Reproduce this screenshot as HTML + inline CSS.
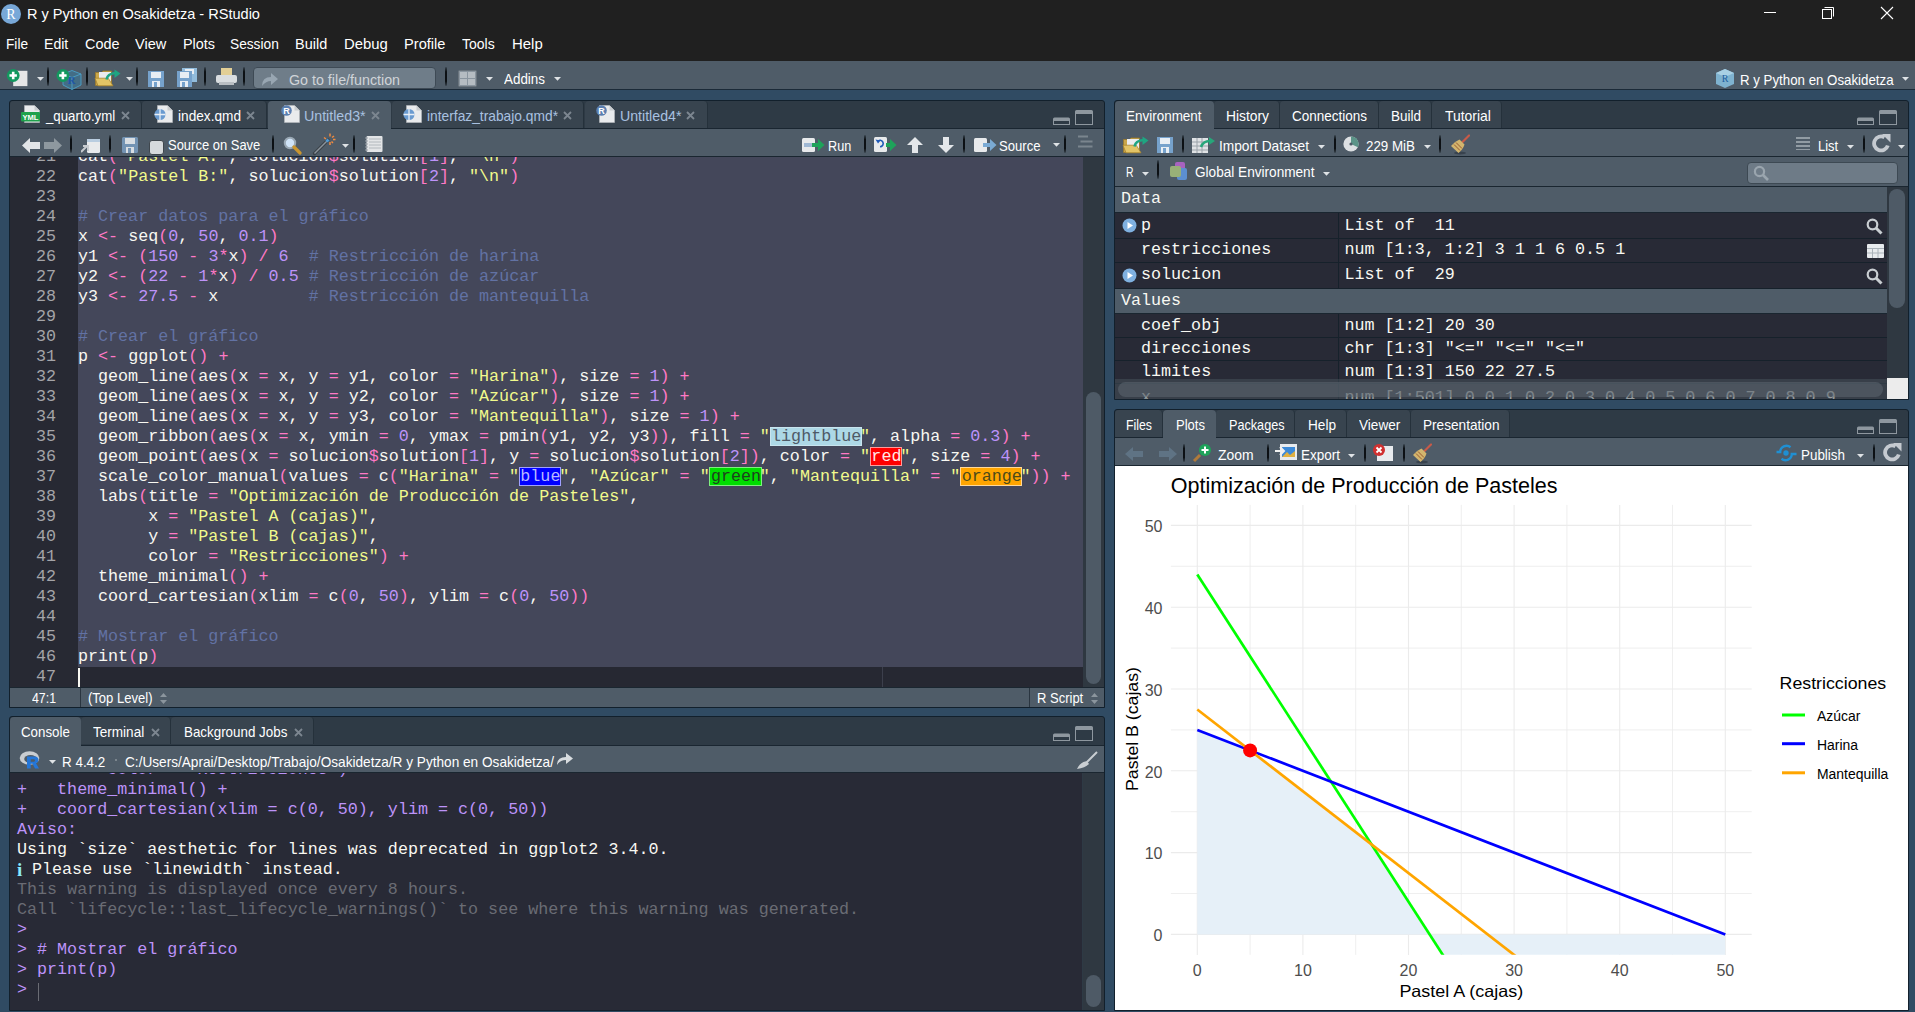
<!DOCTYPE html>
<html><head><meta charset="utf-8">
<style>
*{margin:0;padding:0;box-sizing:border-box}
html,body{width:1915px;height:1012px;overflow:hidden;background:#304b63;font-family:"Liberation Sans",sans-serif;color:#fff;position:relative}
.a{position:absolute}
.ui{font-family:"Liberation Sans",sans-serif;white-space:nowrap}
.mono{font-family:"Liberation Mono",monospace;white-space:pre}
.s{color:#f1fa8c}.n{color:#bd93f9}.o{color:#ff79c6}.c{color:#6272a4}
</style></head><body>

<div class="a" style="left:0px;top:0px;width:1915px;height:61px;background:#202020;"></div>
<svg class="a" style="left:0px;top:3px;" width="22" height="22" viewBox="0 0 22 22"><circle cx="11" cy="11" r="10" fill="#78a8d8"/><text x="11" y="16" font-family="Liberation Serif" font-size="14" fill="#fff" text-anchor="middle">R</text></svg>
<div class="a ui" style="left:27.40px;top:3.80px;font-size:15px;line-height:20px;color:#fff;transform:scaleX(0.9702);transform-origin:0 0;">R y Python en Osakidetza - RStudio</div>
<div class="a" style="left:1764px;top:12px;width:12px;height:1px;background:#fff;"></div>
<svg class="a" style="left:1821px;top:6px;" width="14" height="14" viewBox="0 0 14 14"><rect x="1.5" y="3.5" width="9" height="9" fill="none" stroke="#fff" stroke-width="1"/><path d="M3.5 1.5h9v9" fill="none" stroke="#fff" stroke-width="1"/></svg>
<svg class="a" style="left:1880px;top:6px;" width="14" height="14" viewBox="0 0 14 14"><path d="M1 1L13 13M13 1L1 13" stroke="#fff" stroke-width="1.1"/></svg>
<div class="a ui" style="left:6.40px;top:33.80px;font-size:15px;line-height:20px;color:#fff;transform:scaleX(0.9110);transform-origin:0 0;">File</div>
<div class="a ui" style="left:44.40px;top:33.80px;font-size:15px;line-height:20px;color:#fff;transform:scaleX(0.9391);transform-origin:0 0;">Edit</div>
<div class="a ui" style="left:85.40px;top:33.80px;font-size:15px;line-height:20px;color:#fff;transform:scaleX(0.9623);transform-origin:0 0;">Code</div>
<div class="a ui" style="left:135.40px;top:33.80px;font-size:15px;line-height:20px;color:#fff;transform:scaleX(0.9705);transform-origin:0 0;">View</div>
<div class="a ui" style="left:183.00px;top:33.80px;font-size:15px;line-height:20px;color:#fff;transform:scaleX(0.9588);transform-origin:0 0;">Plots</div>
<div class="a ui" style="left:230.40px;top:33.80px;font-size:15px;line-height:20px;color:#fff;transform:scaleX(0.9139);transform-origin:0 0;">Session</div>
<div class="a ui" style="left:295.30px;top:33.80px;font-size:15px;line-height:20px;color:#fff;transform:scaleX(0.9648);transform-origin:0 0;">Build</div>
<div class="a ui" style="left:344.20px;top:33.80px;font-size:15px;line-height:20px;color:#fff;transform:scaleX(0.9915);transform-origin:0 0;">Debug</div>
<div class="a ui" style="left:404.40px;top:33.80px;font-size:15px;line-height:20px;color:#fff;transform:scaleX(0.9759);transform-origin:0 0;">Profile</div>
<div class="a ui" style="left:462.00px;top:33.80px;font-size:15px;line-height:20px;color:#fff;transform:scaleX(0.9336);transform-origin:0 0;">Tools</div>
<div class="a ui" style="left:511.70px;top:33.80px;font-size:15px;line-height:20px;color:#fff;transform:scaleX(0.9959);transform-origin:0 0;">Help</div>
<div class="a" style="left:0px;top:61px;width:1915px;height:29px;background:#4f5c68;border-bottom:1px solid #1b2a38"></div>
<svg class="a" style="left:6px;top:67px;" width="24" height="22" viewBox="0 0 24 22"><rect x="7.2" y="3.8" width="14.2" height="15.3" fill="#e6e6e6"/><circle cx="7.2" cy="8.5" r="6.4" fill="#13985e"/><path d="M7.2 4.8v7.4M3.5 8.5h7.4" stroke="#fff" stroke-width="2.6"/></svg>
<svg class="a" style="left:36.5px;top:77px;" width="7" height="4" viewBox="0 0 7 4"><path d="M0 0h7L3.5 3.8z" fill="#dfe3e6"/></svg>
<div class="a" style="left:47px;top:67px;width:2px;height:19px;background:linear-gradient(#3a4650,#0c1014 25%,#0c1014 75%,#3a4650);border-radius:1px"></div>
<svg class="a" style="left:56px;top:67px;" width="27" height="23" viewBox="0 0 27 23"><path d="M16 3.5l9 3.5v11l-9 4.5-9-4.5V7z" fill="#3f7390" fill-opacity="0.75" stroke="#4aa0c8" stroke-width="0.9"/><path d="M7 7l9 3.5 9-3.5M16 10.5v12" stroke="#4aa0c8" stroke-width="0.9" fill="none"/><text x="15.5" y="17" font-family="Liberation Serif" font-size="11" font-weight="bold" fill="#1f55a8" text-anchor="middle">R</text><circle cx="6.9" cy="8.5" r="6.4" fill="#13985e"/><path d="M6.9 4.8v7.4M3.2 8.5h7.4" stroke="#fff" stroke-width="2.6"/></svg>
<div class="a" style="left:86px;top:67px;width:2px;height:19px;background:linear-gradient(#3a4650,#0c1014 25%,#0c1014 75%,#3a4650);border-radius:1px"></div>
<svg class="a" style="left:94px;top:69px;" width="28" height="19" viewBox="0 0 28 19"><path d="M1.5 3.5h6l1.5-1.5h8.5v14.5H1.5z" fill="#c9a64a" stroke="#9b7a2c" stroke-width="0.8"/><rect x="5" y="3" width="12" height="11" fill="#ebebed"/><path d="M1 9.2h13.2l4.8 7.6H4z" fill="#e2c466" stroke="#a98530" stroke-width="0.8"/><path d="M12.5 10.5q1-6 9-6.5" stroke="#1fa582" stroke-width="2.6" fill="none"/><path d="M20.5 0.5l6 4-6 4.5z" fill="#1fa582"/></svg>
<svg class="a" style="left:125.5px;top:77px;" width="7" height="4" viewBox="0 0 7 4"><path d="M0 0h7L3.5 3.8z" fill="#dfe3e6"/></svg>
<div class="a" style="left:136px;top:67px;width:2px;height:19px;background:linear-gradient(#3a4650,#0c1014 25%,#0c1014 75%,#3a4650);border-radius:1px"></div>
<svg class="a" style="left:148px;top:71px;" width="16" height="16" viewBox="0 0 16 16"><path d="M0 0h16v16H0z" fill="#76a2cc"/><rect x="3" y="1" width="10" height="6" fill="#e8eef4"/><rect x="4" y="10" width="8" height="6" fill="#e8eef4"/><rect x="6" y="11" width="3" height="5" fill="#76a2cc"/></svg>
<svg class="a" style="left:177px;top:68px;" width="20" height="19" viewBox="0 0 20 19"><path d="M5 0h15v14H5z" fill="#92bcdc"/><rect x="8" y="1" width="9" height="5" fill="#e8eef4"/><path d="M0 3h15v16H0z" fill="#76a2cc"/><rect x="3" y="4" width="9" height="6" fill="#e8eef4"/><rect x="3" y="13" width="8" height="6" fill="#e8eef4"/><rect x="5" y="14" width="3" height="5" fill="#76a2cc"/></svg>
<div class="a" style="left:204px;top:67px;width:2px;height:19px;background:linear-gradient(#3a4650,#0c1014 25%,#0c1014 75%,#3a4650);border-radius:1px"></div>
<svg class="a" style="left:216px;top:68px;" width="21" height="18" viewBox="0 0 21 18"><rect x="5" y="0" width="11" height="8" fill="#e2cf96"/><rect x="0" y="7" width="21" height="8" rx="2" fill="#d9dde0"/><rect x="3" y="14" width="15" height="3" fill="#b9bec3"/></svg>
<div class="a" style="left:243px;top:67px;width:2px;height:19px;background:linear-gradient(#3a4650,#0c1014 25%,#0c1014 75%,#3a4650);border-radius:1px"></div>
<div class="a" style="left:253px;top:67px;width:183px;height:22px;background:#6f7d89;border:1px solid #3e4a55;border-radius:4px"></div>
<svg class="a" style="left:261px;top:71px;" width="18" height="15" viewBox="0 0 18 15"><path d="M1 15q0-9 9-9V2l7 6-7 6v-4q-5 0-9 5z" fill="#98a6b2"/></svg>
<div class="a ui" style="left:289.00px;top:69.98px;font-size:14.5px;line-height:20px;color:#d0d4d8;transform:scaleX(0.9840);transform-origin:0 0;">Go to file/function</div>
<div class="a" style="left:445px;top:67px;width:2px;height:19px;background:linear-gradient(#3a4650,#0c1014 25%,#0c1014 75%,#3a4650);border-radius:1px"></div>
<svg class="a" style="left:458px;top:70px;" width="19" height="17" viewBox="0 0 19 17"><rect x="0.5" y="0.5" width="18" height="16" rx="1" fill="#8a959f" stroke="#6a747d"/><rect x="2" y="2" width="7" height="6" fill="#b5bcc2"/><rect x="10" y="2" width="7" height="6" fill="#b5bcc2"/><rect x="2" y="9" width="7" height="6" fill="#b5bcc2"/><rect x="10" y="9" width="7" height="6" fill="#b5bcc2"/></svg>
<svg class="a" style="left:485.5px;top:77px;" width="7" height="4" viewBox="0 0 7 4"><path d="M0 0h7L3.5 3.8z" fill="#dfe3e6"/></svg>
<div class="a ui" style="left:504.00px;top:69.48px;font-size:14.5px;line-height:20px;color:#fff;transform:scaleX(0.9240);transform-origin:0 0;">Addins</div>
<svg class="a" style="left:553.5px;top:77px;" width="7" height="4" viewBox="0 0 7 4"><path d="M0 0h7L3.5 3.8z" fill="#dfe3e6"/></svg>
<svg class="a" style="left:1715px;top:68px;" width="20" height="21" viewBox="0 0 20 21"><path d="M10 1l9 4v11l-9 4-9-4V5z" fill="#7fb2cf"/><path d="M10 1l9 4-9 4-9-4z" fill="#a9d0e4"/><text x="10" y="14" font-family="Liberation Serif" font-size="10" fill="#2060a0" text-anchor="middle">R</text></svg>
<div class="a ui" style="left:1740.00px;top:69.98px;font-size:14.5px;line-height:20px;color:#fff;transform:scaleX(0.9160);transform-origin:0 0;">R y Python en Osakidetza</div>
<svg class="a" style="left:1901.5px;top:77px;" width="7" height="4" viewBox="0 0 7 4"><path d="M0 0h7L3.5 3.8z" fill="#dfe3e6"/></svg>
<div class="a" style="left:9px;top:100px;width:1096px;height:608px;background:#2e3a45;border:1px solid #12202c;border-radius:3px 3px 0 0"></div>
<div class="a" style="left:10px;top:128px;width:1094px;height:1px;background:#1a2631;"></div>
<div class="a" style="left:10px;top:101px;width:132px;height:27px;background:#38444f;border-radius:4px 4px 0 0;border-right:1px solid #25313b;"></div>
<svg class="a" style="left:21px;top:104.5px;" width="20" height="19" viewBox="0 0 20 19"><path d="M3.5 0.5h10l5 5v12h-15z" fill="#e9ebed" stroke="#b8bcc0" stroke-width="0.6"/><path d="M13.5 0.5v5h5" fill="#c9cdd0"/><rect x="0" y="7" width="19" height="9.5" rx="1" fill="#1ea14c"/><text x="9.5" y="14.8" font-family="Liberation Sans" font-size="8" font-weight="bold" fill="#fff" text-anchor="middle" textLength="16" lengthAdjust="spacingAndGlyphs">YML</text></svg>
<div class="a ui" style="left:45.77px;top:105.98px;font-size:14.5px;line-height:20px;color:#ffffff;transform:scaleX(0.9138);transform-origin:0 0;">_quarto.yml</div>
<svg class="a" style="left:121px;top:111px;" width="9" height="9" viewBox="0 0 9 9"><path d="M1 1L8 8M8 1L1 8" stroke="#7c8690" stroke-width="1.8"/></svg>
<div class="a" style="left:142px;top:101px;width:125px;height:27px;background:#38444f;border-radius:4px 4px 0 0;border-right:1px solid #25313b;"></div>
<svg class="a" style="left:153.5px;top:104.5px;" width="20" height="19" viewBox="0 0 20 19"><path d="M3.5 0.5h10l5 5v12h-15z" fill="#e9ebed" stroke="#b8bcc0" stroke-width="0.6"/><path d="M13.5 0.5v5h5" fill="#c9cdd0"/><circle cx="6" cy="9.5" r="5.5" fill="#6a9bd0"/><path d="M6 4v11M0.5 9.5h11" stroke="#e8eef5" stroke-width="1.3"/></svg>
<div class="a ui" style="left:178.00px;top:105.98px;font-size:14.5px;line-height:20px;color:#ffffff;transform:scaleX(0.9415);transform-origin:0 0;">index.qmd</div>
<svg class="a" style="left:246px;top:111px;" width="9" height="9" viewBox="0 0 9 9"><path d="M1 1L8 8M8 1L1 8" stroke="#7c8690" stroke-width="1.8"/></svg>
<div class="a" style="left:268px;top:101px;width:123px;height:28px;background:#4f5c68;border-radius:4px 4px 0 0;"></div>
<svg class="a" style="left:280.5px;top:104.5px;" width="20" height="19" viewBox="0 0 20 19"><path d="M3.5 0.5h10l5 5v12h-15z" fill="#e9ebed" stroke="#b8bcc0" stroke-width="0.6"/><path d="M13.5 0.5v5h5" fill="#c9cdd0"/><circle cx="5.5" cy="5.5" r="5.3" fill="#5b7fb0"/><text x="5.5" y="9.2" font-family="Liberation Sans" font-size="9" font-weight="bold" fill="#fff" text-anchor="middle">R</text></svg>
<div class="a ui" style="left:303.50px;top:105.98px;font-size:14.5px;line-height:20px;color:#a9c1e0;transform:scaleX(0.9800);transform-origin:0 0;">Untitled3*</div>
<svg class="a" style="left:371px;top:111px;" width="9" height="9" viewBox="0 0 9 9"><path d="M1 1L8 8M8 1L1 8" stroke="#7c8690" stroke-width="1.8"/></svg>
<div class="a" style="left:392px;top:101px;width:192px;height:27px;background:#38444f;border-radius:4px 4px 0 0;border-right:1px solid #25313b;"></div>
<svg class="a" style="left:403px;top:104.5px;" width="20" height="19" viewBox="0 0 20 19"><path d="M3.5 0.5h10l5 5v12h-15z" fill="#e9ebed" stroke="#b8bcc0" stroke-width="0.6"/><path d="M13.5 0.5v5h5" fill="#c9cdd0"/><circle cx="6" cy="9.5" r="5.5" fill="#6a9bd0"/><path d="M6 4v11M0.5 9.5h11" stroke="#e8eef5" stroke-width="1.3"/></svg>
<div class="a ui" style="left:427.00px;top:105.98px;font-size:14.5px;line-height:20px;color:#a9c1e0;transform:scaleX(0.9505);transform-origin:0 0;">interfaz_trabajo.qmd*</div>
<svg class="a" style="left:563px;top:111px;" width="9" height="9" viewBox="0 0 9 9"><path d="M1 1L8 8M8 1L1 8" stroke="#7c8690" stroke-width="1.8"/></svg>
<div class="a" style="left:585px;top:101px;width:123px;height:27px;background:#38444f;border-radius:4px 4px 0 0;border-right:1px solid #25313b;"></div>
<svg class="a" style="left:596px;top:104.5px;" width="20" height="19" viewBox="0 0 20 19"><path d="M3.5 0.5h10l5 5v12h-15z" fill="#e9ebed" stroke="#b8bcc0" stroke-width="0.6"/><path d="M13.5 0.5v5h5" fill="#c9cdd0"/><circle cx="5.5" cy="5.5" r="5.3" fill="#5b7fb0"/><text x="5.5" y="9.2" font-family="Liberation Sans" font-size="9" font-weight="bold" fill="#fff" text-anchor="middle">R</text></svg>
<div class="a ui" style="left:620.00px;top:105.98px;font-size:14.5px;line-height:20px;color:#a9c1e0;transform:scaleX(0.9768);transform-origin:0 0;">Untitled4*</div>
<svg class="a" style="left:686px;top:111px;" width="9" height="9" viewBox="0 0 9 9"><path d="M1 1L8 8M8 1L1 8" stroke="#7c8690" stroke-width="1.8"/></svg>
<svg class="a" style="left:1053px;top:110px;" width="42" height="16" viewBox="0 0 42 16"><path fill="#8e979f" fill-rule="evenodd" d="M1.5 7.5h14a1.5 1.5 0 0 1 1.5 1.5v6H0V9a1.5 1.5 0 0 1 1.5-1.5zM1 11v3h15v-3z"/><path fill="#8e979f" fill-rule="evenodd" d="M23.5 0h15a1.5 1.5 0 0 1 1.5 1.5V15H22V1.5A1.5 1.5 0 0 1 23.5 0zM23 4v10h16V4z"/></svg>
<div class="a" style="left:10px;top:129px;width:1094px;height:28px;background:#4f5c68;border-bottom:1px solid #1a2630"></div>
<svg class="a" style="left:22px;top:138px;" width="40" height="15" viewBox="0 0 40 15"><path d="M0 7.5L8 0v4h10v7H8v4z" fill="#e2e5e8"/><path d="M40 7.5L32 0v4H22v7h10v4z" fill="#8e989f"/></svg>
<div class="a" style="left:70px;top:135px;width:2px;height:18px;background:linear-gradient(#3a4650,#0c1014 25%,#0c1014 75%,#3a4650);border-radius:1px"></div>
<svg class="a" style="left:81px;top:138px;" width="19" height="15" viewBox="0 0 19 15"><rect x="6" y="1" width="13" height="14" rx="1.5" fill="#e8eaec"/><rect x="6" y="1" width="13" height="3" fill="#b9cde0"/><path d="M0 14l6-6M2 8h5v5" stroke="#c8ccd0" stroke-width="2" fill="none"/></svg>
<div class="a" style="left:109px;top:135px;width:2px;height:18px;background:linear-gradient(#3a4650,#0c1014 25%,#0c1014 75%,#3a4650);border-radius:1px"></div>
<svg class="a" style="left:122px;top:137px;" width="16" height="16" viewBox="0 0 16 16"><path d="M1.5 0h13a1.5 1.5 0 0 1 1.5 1.5v13a1.5 1.5 0 0 1-1.5 1.5h-13A1.5 1.5 0 0 1 0 14.5v-13A1.5 1.5 0 0 1 1.5 0z" fill="#7393b3"/><rect x="3" y="1" width="10" height="6" fill="#d9dee3"/><rect x="4" y="10" width="8" height="6" fill="#d9dee3"/><rect x="6" y="11" width="3" height="5" fill="#7393b3"/></svg>
<div class="a" style="left:149px;top:140px;width:15px;height:15px;background:#d5d9dc;border:1px solid #3f474e;border-radius:3px"></div>
<div class="a ui" style="left:167.70px;top:135.48px;font-size:14.5px;line-height:20px;color:#fff;transform:scaleX(0.8947);transform-origin:0 0;">Source on Save</div>
<div class="a" style="left:272px;top:135px;width:2px;height:18px;background:linear-gradient(#3a4650,#0c1014 25%,#0c1014 75%,#3a4650);border-radius:1px"></div>
<svg class="a" style="left:283px;top:136px;" width="19" height="19" viewBox="0 0 19 19"><circle cx="7" cy="7" r="5.2" fill="#cfe3f7" stroke="#9aa8b4" stroke-width="2"/><path d="M11 11l6 6" stroke="#c9962f" stroke-width="3.2" stroke-linecap="round"/></svg>
<svg class="a" style="left:312px;top:133px;" width="24" height="23" viewBox="0 0 24 23"><path d="M2.5 20.5L16 7" stroke="#3a4148" stroke-width="3.4" stroke-linecap="round"/><path d="M2.5 20.5L16 7" stroke="#8a949c" stroke-width="1.4"/><path d="M14.5 8.5L16.5 6.5" stroke="#4a9ad8" stroke-width="3"/><path d="M18 0.5v3M18 9v3M12 4.5l2 1.5M22 3l-2 1.5M21 10l-1.5-1.5M23.5 6.5h-2.5" stroke="#f08a40" stroke-width="1.5"/></svg>
<svg class="a" style="left:341.5px;top:144px;" width="7" height="4" viewBox="0 0 7 4"><path d="M0 0h7L3.5 3.8z" fill="#dfe3e6"/></svg>
<div class="a" style="left:353px;top:135px;width:2px;height:18px;background:linear-gradient(#3a4650,#0c1014 25%,#0c1014 75%,#3a4650);border-radius:1px"></div>
<svg class="a" style="left:365px;top:135px;" width="18" height="18" viewBox="0 0 18 18"><rect x="1.5" y="1" width="16" height="16" rx="1" fill="#e3e5e7"/><path d="M4 4h12M4 7h12M4 10h12M4 13h12" stroke="#b2b8bd" stroke-width="1"/><path d="M0 3h3M0 6h3M0 9h3M0 12h3M0 15h3" stroke="#9aa0a6" stroke-width="1.2"/></svg>
<svg class="a" style="left:802px;top:137px;" width="25" height="16" viewBox="0 0 25 16"><rect x="0" y="1" width="13" height="14" rx="1.5" fill="#e8eaec"/><rect x="2" y="6" width="8" height="4" fill="#9fb8d4"/><path d="M10 6h6V2l6.5 6-6.5 6v-4h-6z" fill="#1ea35a"/></svg>
<div class="a ui" style="left:828.40px;top:135.98px;font-size:14.5px;line-height:20px;color:#fff;transform:scaleX(0.8719);transform-origin:0 0;">Run</div>
<div class="a" style="left:864px;top:135px;width:2px;height:18px;background:linear-gradient(#3a4650,#0c1014 25%,#0c1014 75%,#3a4650);border-radius:1px"></div>
<svg class="a" style="left:874px;top:136px;" width="24" height="17" viewBox="0 0 24 17"><rect x="0" y="1" width="13" height="15" rx="1.5" fill="#e8eaec"/><path d="M3.5 5.5a3.2 3.2 0 1 1 2.5 5.2" stroke="#1f5ab8" stroke-width="1.6" fill="none"/><path d="M1.5 3.5l2.5 4 2.5-3z" fill="#1f5ab8"/><path d="M12 7h4V3l6.5 6-6.5 6v-4h-4z" fill="#1ea35a"/></svg>
<svg class="a" style="left:907px;top:137px;" width="16" height="16" viewBox="0 0 16 16"><path d="M8 0l8 8h-5v8H5V8H0z" fill="#e4e7ea"/></svg>
<svg class="a" style="left:938px;top:137px;" width="16" height="16" viewBox="0 0 16 16"><path d="M8 16l8-8h-5V0H5v8H0z" fill="#e4e7ea"/></svg>
<div class="a" style="left:963px;top:135px;width:2px;height:18px;background:linear-gradient(#3a4650,#0c1014 25%,#0c1014 75%,#3a4650);border-radius:1px"></div>
<svg class="a" style="left:974px;top:137px;" width="24" height="16" viewBox="0 0 24 16"><rect x="0" y="1" width="13" height="14" rx="1.5" fill="#e8eaec"/><path d="M9 6h7V2l6.5 6-6.5 6v-4H9z" fill="#7aaad4"/></svg>
<div class="a ui" style="left:999.00px;top:135.98px;font-size:14.5px;line-height:20px;color:#fff;transform:scaleX(0.9050);transform-origin:0 0;">Source</div>
<svg class="a" style="left:1052.5px;top:143px;" width="7" height="4" viewBox="0 0 7 4"><path d="M0 0h7L3.5 3.8z" fill="#dfe3e6"/></svg>
<div class="a" style="left:1064px;top:135px;width:2px;height:18px;background:linear-gradient(#3a4650,#0c1014 25%,#0c1014 75%,#3a4650);border-radius:1px"></div>
<svg class="a" style="left:1077px;top:135px;" width="16" height="13" viewBox="0 0 16 13"><path d="M1 1.5h10M3.5 6.5h12M1 11.5h14.5" stroke="#7b858e" stroke-width="2"/></svg>
<div class="a" style="left:10px;top:157px;width:68px;height:530px;background:#272933;"></div>
<div class="a" style="left:78px;top:157px;width:1005px;height:510px;background:#44475a;"></div>
<div class="a" style="left:78px;top:667px;width:1005px;height:20px;background:#262832;"></div>
<div class="a" style="left:882px;top:667px;width:1px;height:20px;background:#3c3f4c;"></div>
<div class="a" style="left:78px;top:668px;width:2px;height:19px;background:#f8f8f2;"></div>
<div class="a" style="left:1083px;top:157px;width:21px;height:530px;background:#2f3841;"></div>
<div class="a" style="left:1086px;top:392px;width:15px;height:292px;background:#4e5a66;border-radius:8px"></div>
<div class="a" style="left:11px;top:157px;width:1072px;height:530px;overflow:hidden">
<div class="a mono" style="left:0;top:-10px;width:45px;text-align:right;font-size:16.72px;line-height:20px;color:#a4a4a8">21</div>
<div class="a mono" style="left:67px;top:-10px;font-size:16.72px;line-height:20px;color:#f8f8f2">cat<span class="o">(</span><span class="s">&quot;Pastel A:&quot;</span>, solucion<span class="o">$</span>solution<span class="o">[</span><span class="n">1</span><span class="o">]</span>, <span class="s">&quot;\n&quot;</span><span class="o">)</span></div>
<div class="a mono" style="left:0;top:10px;width:45px;text-align:right;font-size:16.72px;line-height:20px;color:#a4a4a8">22</div>
<div class="a mono" style="left:67px;top:10px;font-size:16.72px;line-height:20px;color:#f8f8f2">cat<span class="o">(</span><span class="s">&quot;Pastel B:&quot;</span>, solucion<span class="o">$</span>solution<span class="o">[</span><span class="n">2</span><span class="o">]</span>, <span class="s">&quot;\n&quot;</span><span class="o">)</span></div>
<div class="a mono" style="left:0;top:30px;width:45px;text-align:right;font-size:16.72px;line-height:20px;color:#a4a4a8">23</div>
<div class="a mono" style="left:67px;top:30px;font-size:16.72px;line-height:20px;color:#f8f8f2"></div>
<div class="a mono" style="left:0;top:50px;width:45px;text-align:right;font-size:16.72px;line-height:20px;color:#a4a4a8">24</div>
<div class="a mono" style="left:67px;top:50px;font-size:16.72px;line-height:20px;color:#f8f8f2"><span class="c"># Crear datos para el gráfico</span></div>
<div class="a mono" style="left:0;top:70px;width:45px;text-align:right;font-size:16.72px;line-height:20px;color:#a4a4a8">25</div>
<div class="a mono" style="left:67px;top:70px;font-size:16.72px;line-height:20px;color:#f8f8f2">x <span class="o">&lt;-</span> seq<span class="o">(</span><span class="n">0</span>, <span class="n">50</span>, <span class="n">0.1</span><span class="o">)</span></div>
<div class="a mono" style="left:0;top:90px;width:45px;text-align:right;font-size:16.72px;line-height:20px;color:#a4a4a8">26</div>
<div class="a mono" style="left:67px;top:90px;font-size:16.72px;line-height:20px;color:#f8f8f2">y1 <span class="o">&lt;-</span> <span class="o">(</span><span class="n">150</span> <span class="o">-</span> <span class="n">3</span><span class="o">*</span>x<span class="o">)</span> <span class="o">/</span> <span class="n">6</span>  <span class="c"># Restricción de harina</span></div>
<div class="a mono" style="left:0;top:110px;width:45px;text-align:right;font-size:16.72px;line-height:20px;color:#a4a4a8">27</div>
<div class="a mono" style="left:67px;top:110px;font-size:16.72px;line-height:20px;color:#f8f8f2">y2 <span class="o">&lt;-</span> <span class="o">(</span><span class="n">22</span> <span class="o">-</span> <span class="n">1</span><span class="o">*</span>x<span class="o">)</span> <span class="o">/</span> <span class="n">0.5</span> <span class="c"># Restricción de azúcar</span></div>
<div class="a mono" style="left:0;top:130px;width:45px;text-align:right;font-size:16.72px;line-height:20px;color:#a4a4a8">28</div>
<div class="a mono" style="left:67px;top:130px;font-size:16.72px;line-height:20px;color:#f8f8f2">y3 <span class="o">&lt;-</span> <span class="n">27.5</span> <span class="o">-</span> x         <span class="c"># Restricción de mantequilla</span></div>
<div class="a mono" style="left:0;top:150px;width:45px;text-align:right;font-size:16.72px;line-height:20px;color:#a4a4a8">29</div>
<div class="a mono" style="left:67px;top:150px;font-size:16.72px;line-height:20px;color:#f8f8f2"></div>
<div class="a mono" style="left:0;top:170px;width:45px;text-align:right;font-size:16.72px;line-height:20px;color:#a4a4a8">30</div>
<div class="a mono" style="left:67px;top:170px;font-size:16.72px;line-height:20px;color:#f8f8f2"><span class="c"># Crear el gráfico</span></div>
<div class="a mono" style="left:0;top:190px;width:45px;text-align:right;font-size:16.72px;line-height:20px;color:#a4a4a8">31</div>
<div class="a mono" style="left:67px;top:190px;font-size:16.72px;line-height:20px;color:#f8f8f2">p <span class="o">&lt;-</span> ggplot<span class="o">(</span><span class="o">)</span> <span class="o">+</span></div>
<div class="a mono" style="left:0;top:210px;width:45px;text-align:right;font-size:16.72px;line-height:20px;color:#a4a4a8">32</div>
<div class="a mono" style="left:67px;top:210px;font-size:16.72px;line-height:20px;color:#f8f8f2">  geom_line<span class="o">(</span>aes<span class="o">(</span>x <span class="o">=</span> x, y <span class="o">=</span> y1, color <span class="o">=</span> <span class="s">&quot;Harina&quot;</span><span class="o">)</span>, size <span class="o">=</span> <span class="n">1</span><span class="o">)</span> <span class="o">+</span></div>
<div class="a mono" style="left:0;top:230px;width:45px;text-align:right;font-size:16.72px;line-height:20px;color:#a4a4a8">33</div>
<div class="a mono" style="left:67px;top:230px;font-size:16.72px;line-height:20px;color:#f8f8f2">  geom_line<span class="o">(</span>aes<span class="o">(</span>x <span class="o">=</span> x, y <span class="o">=</span> y2, color <span class="o">=</span> <span class="s">&quot;Azúcar&quot;</span><span class="o">)</span>, size <span class="o">=</span> <span class="n">1</span><span class="o">)</span> <span class="o">+</span></div>
<div class="a mono" style="left:0;top:250px;width:45px;text-align:right;font-size:16.72px;line-height:20px;color:#a4a4a8">34</div>
<div class="a mono" style="left:67px;top:250px;font-size:16.72px;line-height:20px;color:#f8f8f2">  geom_line<span class="o">(</span>aes<span class="o">(</span>x <span class="o">=</span> x, y <span class="o">=</span> y3, color <span class="o">=</span> <span class="s">&quot;Mantequilla&quot;</span><span class="o">)</span>, size <span class="o">=</span> <span class="n">1</span><span class="o">)</span> <span class="o">+</span></div>
<div class="a mono" style="left:0;top:270px;width:45px;text-align:right;font-size:16.72px;line-height:20px;color:#a4a4a8">35</div>
<div class="a mono" style="left:67px;top:270px;font-size:16.72px;line-height:20px;color:#f8f8f2">  geom_ribbon<span class="o">(</span>aes<span class="o">(</span>x <span class="o">=</span> x, ymin <span class="o">=</span> <span class="n">0</span>, ymax <span class="o">=</span> pmin<span class="o">(</span>y1, y2, y3<span class="o">)</span><span class="o">)</span>, fill <span class="o">=</span> <span class="s">&quot;lightblue&quot;</span>, alpha <span class="o">=</span> <span class="n">0.3</span><span class="o">)</span> <span class="o">+</span></div>
<div class="a mono" style="left:0;top:290px;width:45px;text-align:right;font-size:16.72px;line-height:20px;color:#a4a4a8">36</div>
<div class="a mono" style="left:67px;top:290px;font-size:16.72px;line-height:20px;color:#f8f8f2">  geom_point<span class="o">(</span>aes<span class="o">(</span>x <span class="o">=</span> solucion<span class="o">$</span>solution<span class="o">[</span><span class="n">1</span><span class="o">]</span>, y <span class="o">=</span> solucion<span class="o">$</span>solution<span class="o">[</span><span class="n">2</span><span class="o">]</span><span class="o">)</span>, color <span class="o">=</span> <span class="s">&quot;red&quot;</span>, size <span class="o">=</span> <span class="n">4</span><span class="o">)</span> <span class="o">+</span></div>
<div class="a mono" style="left:0;top:310px;width:45px;text-align:right;font-size:16.72px;line-height:20px;color:#a4a4a8">37</div>
<div class="a mono" style="left:67px;top:310px;font-size:16.72px;line-height:20px;color:#f8f8f2">  scale_color_manual<span class="o">(</span>values <span class="o">=</span> c<span class="o">(</span><span class="s">&quot;Harina&quot;</span> <span class="o">=</span> <span class="s">&quot;blue&quot;</span>, <span class="s">&quot;Azúcar&quot;</span> <span class="o">=</span> <span class="s">&quot;green&quot;</span>, <span class="s">&quot;Mantequilla&quot;</span> <span class="o">=</span> <span class="s">&quot;orange&quot;</span><span class="o">)</span><span class="o">)</span> <span class="o">+</span></div>
<div class="a mono" style="left:0;top:330px;width:45px;text-align:right;font-size:16.72px;line-height:20px;color:#a4a4a8">38</div>
<div class="a mono" style="left:67px;top:330px;font-size:16.72px;line-height:20px;color:#f8f8f2">  labs<span class="o">(</span>title <span class="o">=</span> <span class="s">&quot;Optimización de Producción de Pasteles&quot;</span>,</div>
<div class="a mono" style="left:0;top:350px;width:45px;text-align:right;font-size:16.72px;line-height:20px;color:#a4a4a8">39</div>
<div class="a mono" style="left:67px;top:350px;font-size:16.72px;line-height:20px;color:#f8f8f2">       x <span class="o">=</span> <span class="s">&quot;Pastel A (cajas)&quot;</span>,</div>
<div class="a mono" style="left:0;top:370px;width:45px;text-align:right;font-size:16.72px;line-height:20px;color:#a4a4a8">40</div>
<div class="a mono" style="left:67px;top:370px;font-size:16.72px;line-height:20px;color:#f8f8f2">       y <span class="o">=</span> <span class="s">&quot;Pastel B (cajas)&quot;</span>,</div>
<div class="a mono" style="left:0;top:390px;width:45px;text-align:right;font-size:16.72px;line-height:20px;color:#a4a4a8">41</div>
<div class="a mono" style="left:67px;top:390px;font-size:16.72px;line-height:20px;color:#f8f8f2">       color <span class="o">=</span> <span class="s">&quot;Restricciones&quot;</span><span class="o">)</span> <span class="o">+</span></div>
<div class="a mono" style="left:0;top:410px;width:45px;text-align:right;font-size:16.72px;line-height:20px;color:#a4a4a8">42</div>
<div class="a mono" style="left:67px;top:410px;font-size:16.72px;line-height:20px;color:#f8f8f2">  theme_minimal<span class="o">(</span><span class="o">)</span> <span class="o">+</span></div>
<div class="a mono" style="left:0;top:430px;width:45px;text-align:right;font-size:16.72px;line-height:20px;color:#a4a4a8">43</div>
<div class="a mono" style="left:67px;top:430px;font-size:16.72px;line-height:20px;color:#f8f8f2">  coord_cartesian<span class="o">(</span>xlim <span class="o">=</span> c<span class="o">(</span><span class="n">0</span>, <span class="n">50</span><span class="o">)</span>, ylim <span class="o">=</span> c<span class="o">(</span><span class="n">0</span>, <span class="n">50</span><span class="o">)</span><span class="o">)</span></div>
<div class="a mono" style="left:0;top:450px;width:45px;text-align:right;font-size:16.72px;line-height:20px;color:#a4a4a8">44</div>
<div class="a mono" style="left:67px;top:450px;font-size:16.72px;line-height:20px;color:#f8f8f2"></div>
<div class="a mono" style="left:0;top:470px;width:45px;text-align:right;font-size:16.72px;line-height:20px;color:#a4a4a8">45</div>
<div class="a mono" style="left:67px;top:470px;font-size:16.72px;line-height:20px;color:#f8f8f2"><span class="c"># Mostrar el gráfico</span></div>
<div class="a mono" style="left:0;top:490px;width:45px;text-align:right;font-size:16.72px;line-height:20px;color:#a4a4a8">46</div>
<div class="a mono" style="left:67px;top:490px;font-size:16.72px;line-height:20px;color:#f8f8f2">print<span class="o">(</span>p<span class="o">)</span></div>
<div class="a mono" style="left:0;top:510px;width:45px;text-align:right;font-size:16.72px;line-height:20px;color:#a4a4a8">47</div>
<div class="a mono" style="left:67px;top:510px;font-size:16.72px;line-height:20px;color:#f8f8f2"></div>
</div>
<div class="a mono" style="left:769.57px;top:427px;width:92.27px;height:19px;background:#add8e6;border:1px solid #c8e4ee;font-size:16.72px;line-height:18px;color:#4f5a66;padding-left:0.5px">lightblue</div>
<div class="a mono" style="left:869.87px;top:447px;width:32.09px;height:19px;background:#ff0000;border:1px solid #ff9a9a;font-size:16.72px;line-height:18px;color:#ffe8e8;padding-left:0.5px">red</div>
<div class="a mono" style="left:518.82px;top:467px;width:42.12px;height:19px;background:#0000ff;border:1px solid #a0a0ff;font-size:16.72px;line-height:18px;color:#b8b8ff;padding-left:0.5px">blue</div>
<div class="a mono" style="left:709.39px;top:467px;width:52.15px;height:19px;background:#00dd00;border:1px solid #80ee80;font-size:16.72px;line-height:18px;color:#1f3f1f;padding-left:0.5px">green</div>
<div class="a mono" style="left:960.14px;top:467px;width:62.18px;height:19px;background:#ffa500;border:1px solid #ffd898;font-size:16.72px;line-height:18px;color:#4a4a1a;padding-left:0.5px">orange</div>
<div class="a" style="left:10px;top:687px;width:1094px;height:20px;background:#4f5c68;border-top:1px solid #1a2630"></div>
<div class="a" style="left:80px;top:688px;width:1px;height:19px;background:#2a3540;"></div>
<div class="a ui" style="left:31.90px;top:687.98px;font-size:14.5px;line-height:20px;color:#fff;transform:scaleX(0.8510);transform-origin:0 0;">47:1</div>
<div class="a ui" style="left:87.50px;top:687.98px;font-size:14.5px;line-height:20px;color:#fff;transform:scaleX(0.8996);transform-origin:0 0;">(Top Level)</div>
<svg class="a" style="left:160px;top:692px;" width="7" height="13" viewBox="0 0 7 13"><path d="M0 5L3.5 1 7 5zM0 8l3.5 4L7 8z" fill="#8b959d"/></svg>
<div class="a" style="left:1029px;top:688px;width:1px;height:19px;background:#2a3540;"></div>
<div class="a ui" style="left:1036.80px;top:687.98px;font-size:14.5px;line-height:20px;color:#fff;transform:scaleX(0.8963);transform-origin:0 0;">R Script</div>
<svg class="a" style="left:1091px;top:692px;" width="7" height="13" viewBox="0 0 7 13"><path d="M0 5L3.5 1 7 5zM0 8l3.5 4L7 8z" fill="#8b959d"/></svg>
<div class="a" style="left:9px;top:716px;width:1096px;height:295px;background:#2e3a45;border:1px solid #12202c;border-radius:3px 3px 0 0"></div>
<div class="a" style="left:10px;top:745px;width:1094px;height:1px;background:#1a2631;"></div>
<div class="a" style="left:10px;top:717px;width:71px;height:29px;background:#4f5c68;border-radius:4px 4px 0 0"></div>
<div class="a ui" style="left:20.70px;top:721.98px;font-size:14.5px;line-height:20px;color:#fff;transform:scaleX(0.9170);transform-origin:0 0;">Console</div>
<div class="a" style="left:81px;top:717px;width:90px;height:27px;background:#38444f;border-radius:4px 4px 0 0;border-right:1px solid #25313b;"></div>
<div class="a ui" style="left:92.80px;top:721.98px;font-size:14.5px;line-height:20px;color:#fff;transform:scaleX(0.9341);transform-origin:0 0;">Terminal</div>
<svg class="a" style="left:151px;top:728px;" width="9" height="9" viewBox="0 0 9 9"><path d="M1 1L8 8M8 1L1 8" stroke="#7c8690" stroke-width="1.8"/></svg>
<div class="a" style="left:171px;top:717px;width:143px;height:27px;background:#38444f;border-radius:4px 4px 0 0;border-right:1px solid #25313b;"></div>
<div class="a ui" style="left:183.70px;top:721.98px;font-size:14.5px;line-height:20px;color:#fff;transform:scaleX(0.9222);transform-origin:0 0;">Background Jobs</div>
<svg class="a" style="left:294px;top:728px;" width="9" height="9" viewBox="0 0 9 9"><path d="M1 1L8 8M8 1L1 8" stroke="#7c8690" stroke-width="1.8"/></svg>
<svg class="a" style="left:1053px;top:726px;" width="42" height="16" viewBox="0 0 42 16"><path fill="#8e979f" fill-rule="evenodd" d="M1.5 7.5h14a1.5 1.5 0 0 1 1.5 1.5v6H0V9a1.5 1.5 0 0 1 1.5-1.5zM1 11v3h15v-3z"/><path fill="#8e979f" fill-rule="evenodd" d="M23.5 0h15a1.5 1.5 0 0 1 1.5 1.5V15H22V1.5A1.5 1.5 0 0 1 23.5 0zM23 4v10h16V4z"/></svg>
<div class="a" style="left:10px;top:746px;width:1094px;height:27px;background:#4f5c68;border-bottom:1px solid #1a2630"></div>
<svg class="a" style="left:19px;top:750px;" width="24" height="20" viewBox="0 0 24 20"><ellipse cx="10.5" cy="8" rx="9.8" ry="6.8" fill="#c9cdd1"/><ellipse cx="11.5" cy="9" rx="6.3" ry="4" fill="#4f5c68"/><path d="M8 6.5h7.5q4 0 4 3.5q0 2.5-2.5 3.2l3 5.3h-4l-2.5-4.7H11.7v4.7H8z M11.7 9.2v2.6h3q1.3 0 1.3-1.3q0-1.3-1.3-1.3z" fill="#2476d8" fill-rule="evenodd"/></svg>
<svg class="a" style="left:48.5px;top:760px;" width="7" height="4" viewBox="0 0 7 4"><path d="M0 0h7L3.5 3.8z" fill="#dfe3e6"/></svg>
<div class="a ui" style="left:62.30px;top:751.98px;font-size:14.5px;line-height:20px;color:#fff;transform:scaleX(0.9260);transform-origin:0 0;">R 4.4.2</div>
<div class="a" style="left:115px;top:759px;width:2px;height:2px;background:#8a939a;border-radius:1px"></div>
<div class="a ui" style="left:124.70px;top:751.98px;font-size:14.5px;line-height:20px;color:#fff;transform:scaleX(0.9398);transform-origin:0 0;">C:/Users/Aprai/Desktop/Trabajo/Osakidetza/R y Python en Osakidetza/</div>
<svg class="a" style="left:557px;top:752px;" width="16" height="13" viewBox="0 0 16 13"><path d="M0 13q0-8 9-8V1l7 5.5-7 5.5V8q-6 0-9 5z" fill="#d8dcdf"/></svg>
<svg class="a" style="left:1074px;top:751px;" width="24" height="19" viewBox="0 0 24 19"><path d="M23 1L13 11" stroke="#c9ced2" stroke-width="2"/><path d="M3 18q3-7 10-8l2 3q-4 4-12 5z" fill="#c9ced2"/></svg>
<div class="a" style="left:10px;top:773px;width:1072px;height:237px;background:#282a36;"></div>
<div class="a" style="left:1083px;top:773px;width:21px;height:237px;background:#2f3841;"></div>
<div class="a" style="left:1086px;top:975px;width:15px;height:32px;background:#4e5a66;border-radius:8px"></div>
<div class="a" style="left:11px;top:773px;width:1072px;height:237px;overflow:hidden">
<div class="a mono" style="left:6px;top:-13px;font-size:16.72px;line-height:20px;color:#bd93f9">+        color = "Restricciones") +</div>
<div class="a mono" style="left:6px;top:7px;font-size:16.72px;line-height:20px;color:#bd93f9">+   theme_minimal() +</div>
<div class="a mono" style="left:6px;top:27px;font-size:16.72px;line-height:20px;color:#bd93f9">+   coord_cartesian(xlim = c(0, 50), ylim = c(0, 50))</div>
<div class="a mono" style="left:6px;top:47px;font-size:16.72px;line-height:20px;color:#bd93f9">Aviso:</div>
<div class="a mono" style="left:6px;top:67px;font-size:16.72px;line-height:20px;color:#f8f8f2">Using `size` aesthetic for lines was deprecated in ggplot2 3.4.0.</div>
<div class="a mono" style="left:6px;top:87px;font-size:16.72px;line-height:20px;color:#f8f8f2"><span style="color:#8be9fd;font-weight:bold;font-family:Liberation Serif;font-size:19px;display:inline-block;width:5px;vertical-align:top">i</span> Please use `linewidth` instead.</div>
<div class="a mono" style="left:6px;top:107px;font-size:16.72px;line-height:20px;color:#6a6c74">This warning is displayed once every 8 hours.</div>
<div class="a mono" style="left:6px;top:127px;font-size:16.72px;line-height:20px;color:#6a6c74">Call `lifecycle::last_lifecycle_warnings()` to see where this warning was generated.</div>
<div class="a mono" style="left:6px;top:147px;font-size:16.72px;line-height:20px;color:#bd93f9">&gt;</div>
<div class="a mono" style="left:6px;top:167px;font-size:16.72px;line-height:20px;color:#bd93f9">&gt; # Mostrar el gráfico</div>
<div class="a mono" style="left:6px;top:187px;font-size:16.72px;line-height:20px;color:#bd93f9">&gt; print(p)</div>
<div class="a mono" style="left:6px;top:207px;font-size:16.72px;line-height:20px;color:#bd93f9">&gt; </div>
</div>
<div class="a" style="left:38px;top:983px;width:1px;height:18px;background:#6a6c74;"></div>
<div class="a" style="left:1114px;top:100px;width:795px;height:300px;background:#2e3a45;border:1px solid #12202c;border-radius:3px 3px 0 0"></div>
<div class="a" style="left:1115px;top:128px;width:793px;height:1px;background:#1a2631;"></div>
<div class="a" style="left:1115px;top:101px;width:99px;height:28px;background:#4f5c68;border-radius:4px 4px 0 0;"></div>
<div class="a ui" style="left:1126.40px;top:105.98px;font-size:14.5px;line-height:20px;color:#fff;transform:scaleX(0.9285);transform-origin:0 0;">Environment</div>
<div class="a" style="left:1214px;top:101px;width:66px;height:27px;background:#38444f;border-radius:4px 4px 0 0;border-right:1px solid #25313b;"></div>
<div class="a ui" style="left:1226.00px;top:105.98px;font-size:14.5px;line-height:20px;color:#fff;transform:scaleX(0.9535);transform-origin:0 0;">History</div>
<div class="a" style="left:1280px;top:101px;width:99px;height:27px;background:#38444f;border-radius:4px 4px 0 0;border-right:1px solid #25313b;"></div>
<div class="a ui" style="left:1292.00px;top:105.98px;font-size:14.5px;line-height:20px;color:#fff;transform:scaleX(0.9303);transform-origin:0 0;">Connections</div>
<div class="a" style="left:1379px;top:101px;width:53px;height:27px;background:#38444f;border-radius:4px 4px 0 0;border-right:1px solid #25313b;"></div>
<div class="a ui" style="left:1391.00px;top:105.98px;font-size:14.5px;line-height:20px;color:#fff;transform:scaleX(0.9299);transform-origin:0 0;">Build</div>
<div class="a" style="left:1432px;top:101px;width:70px;height:27px;background:#38444f;border-radius:4px 4px 0 0;border-right:1px solid #25313b;"></div>
<div class="a ui" style="left:1444.70px;top:105.98px;font-size:14.5px;line-height:20px;color:#fff;transform:scaleX(0.9613);transform-origin:0 0;">Tutorial</div>
<svg class="a" style="left:1857px;top:110px;" width="42" height="16" viewBox="0 0 42 16"><path fill="#8e979f" fill-rule="evenodd" d="M1.5 7.5h14a1.5 1.5 0 0 1 1.5 1.5v6H0V9a1.5 1.5 0 0 1 1.5-1.5zM1 11v3h15v-3z"/><path fill="#8e979f" fill-rule="evenodd" d="M23.5 0h15a1.5 1.5 0 0 1 1.5 1.5V15H22V1.5A1.5 1.5 0 0 1 23.5 0zM23 4v10h16V4z"/></svg>
<div class="a" style="left:1115px;top:129px;width:793px;height:28px;background:#4f5c68;border-bottom:1px solid #1a2630"></div>
<svg class="a" style="left:1122px;top:136px;" width="28" height="19" viewBox="0 0 28 19"><path d="M1.5 3.5h6l1.5-1.5h8.5v14.5H1.5z" fill="#c9a64a" stroke="#9b7a2c" stroke-width="0.8"/><rect x="5" y="3" width="12" height="11" fill="#ebebed"/><path d="M1 9.2h13.2l4.8 7.6H4z" fill="#e2c466" stroke="#a98530" stroke-width="0.8"/><path d="M12.5 10.5q1-6 9-6.5" stroke="#1fa582" stroke-width="2.6" fill="none"/><path d="M20.5 0.5l6 4-6 4.5z" fill="#1fa582"/></svg>
<svg class="a" style="left:1157px;top:137px;" width="16" height="16" viewBox="0 0 16 16"><path d="M0 0h16v16H0z" fill="#76a2cc"/><rect x="3" y="1" width="10" height="6" fill="#e8eef4"/><rect x="4" y="10" width="8" height="6" fill="#e8eef4"/><rect x="6" y="11" width="3" height="5" fill="#76a2cc"/></svg>
<div class="a" style="left:1182px;top:135px;width:2px;height:18px;background:linear-gradient(#3a4650,#0c1014 25%,#0c1014 75%,#3a4650);border-radius:1px"></div>
<svg class="a" style="left:1192px;top:137px;" width="24" height="16" viewBox="0 0 24 16"><rect x="0" y="1" width="16" height="15" fill="#dfe2e5"/><path d="M0 5h16M0 9h16M0 13h16M5 1v15M10 1v15" stroke="#9aa2a9" stroke-width="1"/><path d="M9 10q2-6 9-6" stroke="#27a67a" stroke-width="2.5" fill="none"/><path d="M17 0l6 4-6 4z" fill="#27a67a"/></svg>
<div class="a ui" style="left:1219.00px;top:135.98px;font-size:14.5px;line-height:20px;color:#fff;transform:scaleX(0.9462);transform-origin:0 0;">Import Dataset</div>
<svg class="a" style="left:1317.5px;top:145px;" width="7" height="4" viewBox="0 0 7 4"><path d="M0 0h7L3.5 3.8z" fill="#dfe3e6"/></svg>
<div class="a" style="left:1334px;top:135px;width:2px;height:18px;background:linear-gradient(#3a4650,#0c1014 25%,#0c1014 75%,#3a4650);border-radius:1px"></div>
<svg class="a" style="left:1343px;top:136px;" width="16" height="16" viewBox="0 0 16 16"><circle cx="8" cy="8" r="7.6" fill="#dde0e3"/><path d="M8 8V0.4A7.6 7.6 0 0 1 14.9 11.2z" fill="#5b9488"/><circle cx="8" cy="8" r="1.6" fill="#4f5c68"/></svg>
<div class="a ui" style="left:1366.00px;top:135.98px;font-size:14.5px;line-height:20px;color:#fff;transform:scaleX(0.9208);transform-origin:0 0;">229 MiB</div>
<svg class="a" style="left:1423.5px;top:145px;" width="7" height="4" viewBox="0 0 7 4"><path d="M0 0h7L3.5 3.8z" fill="#dfe3e6"/></svg>
<div class="a" style="left:1439px;top:135px;width:2px;height:18px;background:linear-gradient(#3a4650,#0c1014 25%,#0c1014 75%,#3a4650);border-radius:1px"></div>
<svg class="a" style="left:1450px;top:134px;" width="20" height="21" viewBox="0 0 20 21"><ellipse cx="10" cy="19" rx="6" ry="1.5" fill="#2f3842" opacity="0.7"/><path d="M19 1.5L12.5 8" stroke="#c85a48" stroke-width="2.2" stroke-linecap="round"/><path d="M9.5 5.5l5 5q-1.5 5-6 8.5l-7.5-7q3.5-4.5 8.5-6.5z" fill="#d2b56e"/><path d="M6 8.5l6 6M4 10.5l6 6" stroke="#9a5a30" stroke-width="1"/></svg>
<svg class="a" style="left:1796px;top:137px;" width="14" height="13" viewBox="0 0 14 13"><path d="M0 1h14M0 5h14M0 9h14M0 13h14" stroke="#a9b1b8" stroke-width="1.4"/></svg>
<div class="a ui" style="left:1818.00px;top:135.98px;font-size:14.5px;line-height:20px;color:#fff;transform:scaleX(0.8870);transform-origin:0 0;">List</div>
<svg class="a" style="left:1846.5px;top:145px;" width="7" height="4" viewBox="0 0 7 4"><path d="M0 0h7L3.5 3.8z" fill="#dfe3e6"/></svg>
<div class="a" style="left:1863px;top:135px;width:2px;height:18px;background:linear-gradient(#3a4650,#0c1014 25%,#0c1014 75%,#3a4650);border-radius:1px"></div>
<svg class="a" style="left:1872px;top:134px;" width="19" height="19" viewBox="0 0 19 19"><path d="M15.8 11.5A7 7 0 1 1 12.5 3.3" stroke="#c5cad0" stroke-width="3.8" fill="none"/><path d="M10 0h8.5v8.5z" fill="#c5cad0"/></svg>
<svg class="a" style="left:1897.5px;top:145px;" width="7" height="4" viewBox="0 0 7 4"><path d="M0 0h7L3.5 3.8z" fill="#dfe3e6"/></svg>
<div class="a" style="left:1115px;top:157px;width:793px;height:30px;background:#4f5c68;border-bottom:1px solid #1a2630"></div>
<div class="a ui" style="left:1125.50px;top:161.98px;font-size:14.5px;line-height:20px;color:#fff;transform:scaleX(0.7184);transform-origin:0 0;">R</div>
<svg class="a" style="left:1141.5px;top:172px;" width="7" height="4" viewBox="0 0 7 4"><path d="M0 0h7L3.5 3.8z" fill="#dfe3e6"/></svg>
<div class="a" style="left:1157px;top:160px;width:2px;height:19px;background:linear-gradient(#3a4650,#0c1014 25%,#0c1014 75%,#3a4650);border-radius:1px"></div>
<svg class="a" style="left:1169px;top:161px;" width="20" height="20" viewBox="0 0 20 20"><rect x="6" y="1" width="10" height="10" rx="2" fill="#a862c0"/><rect x="8" y="7" width="10" height="12" rx="2" fill="#5c8fd0"/><rect x="1" y="5" width="11" height="11" rx="2" fill="#98b078"/></svg>
<div class="a ui" style="left:1194.50px;top:161.98px;font-size:14.5px;line-height:20px;color:#fff;transform:scaleX(0.9381);transform-origin:0 0;">Global Environment</div>
<svg class="a" style="left:1322.5px;top:172px;" width="7" height="4" viewBox="0 0 7 4"><path d="M0 0h7L3.5 3.8z" fill="#dfe3e6"/></svg>
<div class="a" style="left:1747px;top:162px;width:151px;height:22px;background:#6e7b87;border:1px solid #3d4953;border-radius:4px"></div>
<svg class="a" style="left:1753px;top:165px;" width="16" height="16" viewBox="0 0 16 16"><circle cx="6.5" cy="6.5" r="4.6" fill="none" stroke="#9aa5ae" stroke-width="2.2"/><path d="M10 10l5 5" stroke="#9aa5ae" stroke-width="2.6"/></svg>
<div class="a" style="left:1115px;top:187px;width:772px;height:212px;background:#282a36;"></div>
<div class="a" style="left:1115px;top:187px;width:772px;height:212px;overflow:hidden">
<div class="a" style="left:0;top:0px;width:772px;height:26px;background:#4f5c68;border-bottom:1px solid #1a2630"></div>
<div class="a mono" style="left:6px;top:1.55px;font-size:16.72px;line-height:20px;color:#f8f8f2">Data</div>
<div class="a" style="left:0;top:26px;width:772px;height:26px;border-bottom:1px solid #16212b"></div>
<div class="a" style="left:223px;top:26px;width:1px;height:26px;background:#16212b"></div>
<div class="a mono" style="left:26px;top:28.55px;font-size:16.72px;line-height:20px;color:#f8f8f2">p</div>
<div class="a mono" style="left:229.5px;top:28.55px;font-size:16.72px;line-height:20px;color:#f8f8f2">List of  11</div>
<div class="a" style="left:0;top:52px;width:772px;height:24px;border-bottom:1px solid #16212b"></div>
<div class="a" style="left:223px;top:52px;width:1px;height:24px;background:#16212b"></div>
<div class="a mono" style="left:26px;top:53.25px;font-size:16.72px;line-height:20px;color:#f8f8f2">restricciones</div>
<div class="a mono" style="left:229.5px;top:53.25px;font-size:16.72px;line-height:20px;color:#f8f8f2">num [1:3, 1:2] 3 1 1 6 0.5 1</div>
<div class="a" style="left:0;top:76px;width:772px;height:26px;border-bottom:1px solid #16212b"></div>
<div class="a" style="left:223px;top:76px;width:1px;height:26px;background:#16212b"></div>
<div class="a mono" style="left:26px;top:77.95px;font-size:16.72px;line-height:20px;color:#f8f8f2">solucion</div>
<div class="a mono" style="left:229.5px;top:77.95px;font-size:16.72px;line-height:20px;color:#f8f8f2">List of  29</div>
<div class="a" style="left:0;top:102px;width:772px;height:25px;background:#4f5c68;border-bottom:1px solid #1a2630"></div>
<div class="a mono" style="left:6px;top:103.85px;font-size:16.72px;line-height:20px;color:#f8f8f2">Values</div>
<div class="a" style="left:0;top:127px;width:772px;height:24px;border-bottom:1px solid #16212b"></div>
<div class="a" style="left:223px;top:127px;width:1px;height:24px;background:#16212b"></div>
<div class="a mono" style="left:26px;top:128.55px;font-size:16.72px;line-height:20px;color:#f8f8f2">coef_obj</div>
<div class="a mono" style="left:229.5px;top:128.55px;font-size:16.72px;line-height:20px;color:#f8f8f2">num [1:2] 20 30</div>
<div class="a" style="left:0;top:151px;width:772px;height:23px;border-bottom:1px solid #16212b"></div>
<div class="a" style="left:223px;top:151px;width:1px;height:23px;background:#16212b"></div>
<div class="a mono" style="left:26px;top:152.05px;font-size:16.72px;line-height:20px;color:#f8f8f2">direcciones</div>
<div class="a mono" style="left:229.5px;top:152.05px;font-size:16.72px;line-height:20px;color:#f8f8f2">chr [1:3] &quot;&lt;=&quot; &quot;&lt;=&quot; &quot;&lt;=&quot;</div>
<div class="a" style="left:0;top:174px;width:772px;height:23px;border-bottom:1px solid #16212b"></div>
<div class="a" style="left:223px;top:174px;width:1px;height:23px;background:#16212b"></div>
<div class="a mono" style="left:26px;top:175.05px;font-size:16.72px;line-height:20px;color:#f8f8f2">limites</div>
<div class="a mono" style="left:229.5px;top:175.05px;font-size:16.72px;line-height:20px;color:#f8f8f2">num [1:3] 150 22 27.5</div>
<div class="a" style="left:0;top:197px;width:772px;height:24px;border-bottom:1px solid #16212b"></div>
<div class="a" style="left:223px;top:197px;width:1px;height:24px;background:#16212b"></div>
<div class="a mono" style="left:26px;top:200.55px;font-size:16.72px;line-height:20px;color:#f8f8f2">x</div>
<div class="a mono" style="left:229.5px;top:200.55px;font-size:16.72px;line-height:20px;color:#f8f8f2">num [1:501] 0 0.1 0.2 0.3 0.4 0.5 0.6 0.7 0.8 0.9</div>
</div>
<svg class="a" style="left:1122px;top:218px;" width="15" height="15" viewBox="0 0 15 15"><circle cx="7.5" cy="7.5" r="7" fill="#7fb0e0"/><path d="M5.5 4v7l5.5-3.5z" fill="#fff"/></svg>
<svg class="a" style="left:1866px;top:218px;" width="17" height="17" viewBox="0 0 17 17"><circle cx="6.5" cy="6.5" r="4.8" fill="none" stroke="#c9ced2" stroke-width="2.2"/><path d="M10 10l5.5 5.5" stroke="#c9ced2" stroke-width="3"/></svg>
<svg class="a" style="left:1867px;top:244px;" width="17" height="14" viewBox="0 0 17 14"><rect x="0" y="0" width="17" height="14" rx="1" fill="#e8ebee"/><path d="M0 4.5h17M0 9h17M5.5 4.5v10M11 4.5v10" stroke="#aab2b9" stroke-width="1"/></svg>
<svg class="a" style="left:1122px;top:268px;" width="15" height="15" viewBox="0 0 15 15"><circle cx="7.5" cy="7.5" r="7" fill="#7fb0e0"/><path d="M5.5 4v7l5.5-3.5z" fill="#fff"/></svg>
<svg class="a" style="left:1866px;top:268px;" width="17" height="17" viewBox="0 0 17 17"><circle cx="6.5" cy="6.5" r="4.8" fill="none" stroke="#c9ced2" stroke-width="2.2"/><path d="M10 10l5.5 5.5" stroke="#c9ced2" stroke-width="3"/></svg>
<div class="a" style="left:1115px;top:379px;width:772px;height:20px;background:rgba(70,80,90,0.55);"></div>
<div class="a" style="left:1118px;top:382px;width:765px;height:15px;background:rgba(95,105,115,0.5);border-radius:8px"></div>
<div class="a" style="left:1887px;top:187px;width:21px;height:192px;background:#2f3841;"></div>
<div class="a" style="left:1889px;top:189px;width:16px;height:119px;background:#4e5a66;border-radius:8px"></div>
<div class="a" style="left:1887px;top:378px;width:21px;height:21px;background:#ececec;"></div>
<div class="a" style="left:1114px;top:409px;width:795px;height:602px;background:#2e3a45;border:1px solid #12202c;border-radius:3px 3px 0 0"></div>
<div class="a" style="left:1115px;top:437px;width:793px;height:1px;background:#1a2631;"></div>
<div class="a" style="left:1115px;top:410px;width:48px;height:27px;background:#38444f;border-radius:4px 4px 0 0;border-right:1px solid #25313b;"></div>
<div class="a ui" style="left:1126.00px;top:414.98px;font-size:14.5px;line-height:20px;color:#fff;transform:scaleX(0.8498);transform-origin:0 0;">Files</div>
<div class="a" style="left:1163px;top:410px;width:53px;height:28px;background:#4f5c68;border-radius:4px 4px 0 0;"></div>
<div class="a ui" style="left:1176.00px;top:414.98px;font-size:14.5px;line-height:20px;color:#fff;transform:scaleX(0.8989);transform-origin:0 0;">Plots</div>
<div class="a" style="left:1216px;top:410px;width:79px;height:27px;background:#38444f;border-radius:4px 4px 0 0;border-right:1px solid #25313b;"></div>
<div class="a ui" style="left:1228.50px;top:414.98px;font-size:14.5px;line-height:20px;color:#fff;transform:scaleX(0.8719);transform-origin:0 0;">Packages</div>
<div class="a" style="left:1295px;top:410px;width:52px;height:27px;background:#38444f;border-radius:4px 4px 0 0;border-right:1px solid #25313b;"></div>
<div class="a ui" style="left:1307.50px;top:414.98px;font-size:14.5px;line-height:20px;color:#fff;transform:scaleX(0.9397);transform-origin:0 0;">Help</div>
<div class="a" style="left:1347px;top:410px;width:64px;height:27px;background:#38444f;border-radius:4px 4px 0 0;border-right:1px solid #25313b;"></div>
<div class="a ui" style="left:1358.70px;top:414.98px;font-size:14.5px;line-height:20px;color:#fff;transform:scaleX(0.9369);transform-origin:0 0;">Viewer</div>
<div class="a" style="left:1411px;top:410px;width:99px;height:27px;background:#38444f;border-radius:4px 4px 0 0;border-right:1px solid #25313b;"></div>
<div class="a ui" style="left:1423.00px;top:414.98px;font-size:14.5px;line-height:20px;color:#fff;transform:scaleX(0.9396);transform-origin:0 0;">Presentation</div>
<svg class="a" style="left:1857px;top:419px;" width="42" height="16" viewBox="0 0 42 16"><path fill="#8e979f" fill-rule="evenodd" d="M1.5 7.5h14a1.5 1.5 0 0 1 1.5 1.5v6H0V9a1.5 1.5 0 0 1 1.5-1.5zM1 11v3h15v-3z"/><path fill="#8e979f" fill-rule="evenodd" d="M23.5 0h15a1.5 1.5 0 0 1 1.5 1.5V15H22V1.5A1.5 1.5 0 0 1 23.5 0zM23 4v10h16V4z"/></svg>
<div class="a" style="left:1115px;top:438px;width:793px;height:28px;background:#4f5c68;border-bottom:1px solid #1a2630"></div>
<svg class="a" style="left:1125px;top:447px;" width="52" height="14" viewBox="0 0 52 14"><path d="M0 7L8 0v4h10v6H8v4z" fill="#5f7384"/><path d="M52 7L44 0v4H34v6h10v4z" fill="#5f7384"/></svg>
<div class="a" style="left:1183px;top:444px;width:2px;height:18px;background:linear-gradient(#3a4650,#0c1014 25%,#0c1014 75%,#3a4650);border-radius:1px"></div>
<svg class="a" style="left:1192px;top:443px;" width="20" height="20" viewBox="0 0 20 20"><circle cx="13" cy="7" r="6" fill="#1ea35a"/><path d="M13 3.5v7M9.5 7h7" stroke="#fff" stroke-width="2"/><path d="M2 18l6-6" stroke="#b07a3a" stroke-width="3"/></svg>
<div class="a ui" style="left:1218.40px;top:444.98px;font-size:14.5px;line-height:20px;color:#fff;transform:scaleX(0.9609);transform-origin:0 0;">Zoom</div>
<div class="a" style="left:1267px;top:444px;width:2px;height:18px;background:linear-gradient(#3a4650,#0c1014 25%,#0c1014 75%,#3a4650);border-radius:1px"></div>
<svg class="a" style="left:1275px;top:443px;" width="22" height="18" viewBox="0 0 22 18"><rect x="5" y="1" width="17" height="16" fill="#e8ebee"/><rect x="7" y="4" width="13" height="10" fill="#3d8ad8"/><path d="M7 14l5-5 3 3 5-4v6z" fill="#e0b040"/><path d="M0 8h8M5 4l4 4-4 4" stroke="#f0f0f0" stroke-width="2" fill="none"/></svg>
<div class="a ui" style="left:1301.00px;top:444.98px;font-size:14.5px;line-height:20px;color:#fff;transform:scaleX(0.9307);transform-origin:0 0;">Export</div>
<svg class="a" style="left:1347.5px;top:454px;" width="7" height="4" viewBox="0 0 7 4"><path d="M0 0h7L3.5 3.8z" fill="#dfe3e6"/></svg>
<div class="a" style="left:1364px;top:444px;width:2px;height:18px;background:linear-gradient(#3a4650,#0c1014 25%,#0c1014 75%,#3a4650);border-radius:1px"></div>
<svg class="a" style="left:1372px;top:443px;" width="22" height="19" viewBox="0 0 22 19"><rect x="5" y="3" width="16" height="15" fill="#e8ebee"/><circle cx="7" cy="7" r="6" fill="#d03030"/><path d="M4.5 4.5l5 5M9.5 4.5l-5 5" stroke="#fff" stroke-width="1.8"/></svg>
<div class="a" style="left:1403px;top:444px;width:2px;height:18px;background:linear-gradient(#3a4650,#0c1014 25%,#0c1014 75%,#3a4650);border-radius:1px"></div>
<svg class="a" style="left:1412px;top:443px;" width="20" height="21" viewBox="0 0 20 21"><ellipse cx="10" cy="19" rx="6" ry="1.5" fill="#2f3842" opacity="0.7"/><path d="M19 1.5L12.5 8" stroke="#c85a48" stroke-width="2.2" stroke-linecap="round"/><path d="M9.5 5.5l5 5q-1.5 5-6 8.5l-7.5-7q3.5-4.5 8.5-6.5z" fill="#d2b56e"/><path d="M6 8.5l6 6M4 10.5l6 6" stroke="#9a5a30" stroke-width="1"/></svg>
<svg class="a" style="left:1776px;top:444px;" width="21" height="18" viewBox="0 0 21 18"><circle cx="10" cy="9" r="2.7" fill="#1f8fd2"/><path d="M14.5 3.2A6.3 6.3 0 0 0 4.2 8H0.5M5.5 14.8A6.3 6.3 0 0 0 15.8 10H20.5" stroke="#1f8fd2" stroke-width="2.4" fill="none"/></svg>
<div class="a ui" style="left:1801.00px;top:444.98px;font-size:14.5px;line-height:20px;color:#fff;transform:scaleX(0.9251);transform-origin:0 0;">Publish</div>
<svg class="a" style="left:1856.5px;top:454px;" width="7" height="4" viewBox="0 0 7 4"><path d="M0 0h7L3.5 3.8z" fill="#dfe3e6"/></svg>
<div class="a" style="left:1873px;top:444px;width:2px;height:18px;background:linear-gradient(#3a4650,#0c1014 25%,#0c1014 75%,#3a4650);border-radius:1px"></div>
<svg class="a" style="left:1883px;top:443px;" width="19" height="19" viewBox="0 0 19 19"><path d="M15.8 11.5A7 7 0 1 1 12.5 3.3" stroke="#c5cad0" stroke-width="3.8" fill="none"/><path d="M10 0h8.5v8.5z" fill="#c5cad0"/></svg>
<div class="a" style="left:1115px;top:466px;width:793px;height:544px;background:#ffffff;"></div>
<svg class="a" style="left:0;top:0" width="1915" height="1012" viewBox="0 0 1915 1012"><clipPath id="cp"><rect x="1170.9" y="504.9" width="580.8" height="449.9"/></clipPath><line x1="1197.3" y1="504.9" x2="1197.3" y2="954.9" stroke="#ebebeb" stroke-width="1.1"/><line x1="1170.9" y1="934.4" x2="1751.7" y2="934.4" stroke="#ebebeb" stroke-width="1.1"/><line x1="1250.1" y1="504.9" x2="1250.1" y2="954.9" stroke="#ebebeb" stroke-width="0.8"/><line x1="1170.9" y1="893.5" x2="1751.7" y2="893.5" stroke="#ebebeb" stroke-width="0.8"/><line x1="1302.9" y1="504.9" x2="1302.9" y2="954.9" stroke="#ebebeb" stroke-width="1.1"/><line x1="1170.9" y1="852.6" x2="1751.7" y2="852.6" stroke="#ebebeb" stroke-width="1.1"/><line x1="1355.7" y1="504.9" x2="1355.7" y2="954.9" stroke="#ebebeb" stroke-width="0.8"/><line x1="1170.9" y1="811.7" x2="1751.7" y2="811.7" stroke="#ebebeb" stroke-width="0.8"/><line x1="1408.5" y1="504.9" x2="1408.5" y2="954.9" stroke="#ebebeb" stroke-width="1.1"/><line x1="1170.9" y1="770.8" x2="1751.7" y2="770.8" stroke="#ebebeb" stroke-width="1.1"/><line x1="1461.3" y1="504.9" x2="1461.3" y2="954.9" stroke="#ebebeb" stroke-width="0.8"/><line x1="1170.9" y1="729.9" x2="1751.7" y2="729.9" stroke="#ebebeb" stroke-width="0.8"/><line x1="1514.1" y1="504.9" x2="1514.1" y2="954.9" stroke="#ebebeb" stroke-width="1.1"/><line x1="1170.9" y1="689.0" x2="1751.7" y2="689.0" stroke="#ebebeb" stroke-width="1.1"/><line x1="1566.9" y1="504.9" x2="1566.9" y2="954.9" stroke="#ebebeb" stroke-width="0.8"/><line x1="1170.9" y1="648.1" x2="1751.7" y2="648.1" stroke="#ebebeb" stroke-width="0.8"/><line x1="1619.7" y1="504.9" x2="1619.7" y2="954.9" stroke="#ebebeb" stroke-width="1.1"/><line x1="1170.9" y1="607.2" x2="1751.7" y2="607.2" stroke="#ebebeb" stroke-width="1.1"/><line x1="1672.5" y1="504.9" x2="1672.5" y2="954.9" stroke="#ebebeb" stroke-width="0.8"/><line x1="1170.9" y1="566.3" x2="1751.7" y2="566.3" stroke="#ebebeb" stroke-width="0.8"/><line x1="1725.3" y1="504.9" x2="1725.3" y2="954.9" stroke="#ebebeb" stroke-width="1.1"/><line x1="1170.9" y1="525.4" x2="1751.7" y2="525.4" stroke="#ebebeb" stroke-width="1.1"/><g clip-path="url(#cp)"><polygon points="1197.3,934.4 1197.3,729.9 1198.4,730.3 1199.4,730.7 1200.5,731.1 1201.5,731.5 1202.6,731.9 1203.6,732.4 1204.7,732.8 1205.7,733.2 1206.8,733.6 1207.9,734.0 1208.9,734.4 1210.0,734.8 1211.0,735.2 1212.1,735.6 1213.1,736.0 1214.2,736.4 1215.3,736.9 1216.3,737.3 1217.4,737.7 1218.4,738.1 1219.5,738.5 1220.5,738.9 1221.6,739.3 1222.6,739.7 1223.7,740.1 1224.8,740.5 1225.8,740.9 1226.9,741.4 1227.9,741.8 1229.0,742.2 1230.0,742.6 1231.1,743.0 1232.1,743.4 1233.2,743.8 1234.3,744.2 1235.3,744.6 1236.4,745.0 1237.4,745.4 1238.5,745.9 1239.5,746.3 1240.6,746.7 1241.7,747.1 1242.7,747.5 1243.8,747.9 1244.8,748.3 1245.9,748.7 1246.9,749.1 1248.0,749.5 1249.0,749.9 1250.1,750.4 1251.2,751.2 1252.2,752.0 1253.3,752.8 1254.3,753.6 1255.4,754.4 1256.4,755.3 1257.5,756.1 1258.5,756.9 1259.6,757.7 1260.7,758.5 1261.7,759.3 1262.8,760.2 1263.8,761.0 1264.9,761.8 1265.9,762.6 1267.0,763.4 1268.1,764.3 1269.1,765.1 1270.2,765.9 1271.2,766.7 1272.3,767.5 1273.3,768.3 1274.4,769.2 1275.4,770.0 1276.5,770.8 1277.6,771.6 1278.6,772.4 1279.7,773.3 1280.7,774.1 1281.8,774.9 1282.8,775.7 1283.9,776.5 1284.9,777.3 1286.0,778.2 1287.1,779.0 1288.1,779.8 1289.2,780.6 1290.2,781.4 1291.3,782.3 1292.3,783.1 1293.4,783.9 1294.5,784.7 1295.5,785.5 1296.6,786.3 1297.6,787.2 1298.7,788.0 1299.7,788.8 1300.8,789.6 1301.8,790.4 1302.9,791.2 1304.0,792.1 1305.0,792.9 1306.1,793.7 1307.1,794.5 1308.2,795.3 1309.2,796.2 1310.3,797.0 1311.3,797.8 1312.4,798.6 1313.5,799.4 1314.5,800.2 1315.6,801.1 1316.6,801.9 1317.7,802.7 1318.7,803.5 1319.8,804.3 1320.9,805.2 1321.9,806.0 1323.0,806.8 1324.0,807.6 1325.1,808.4 1326.1,809.2 1327.2,810.1 1328.2,810.9 1329.3,811.7 1330.4,812.5 1331.4,813.3 1332.5,814.2 1333.5,815.0 1334.6,815.8 1335.6,816.6 1336.7,817.4 1337.7,818.2 1338.8,819.1 1339.9,819.9 1340.9,820.7 1342.0,821.5 1343.0,822.3 1344.1,823.2 1345.1,824.0 1346.2,824.8 1347.3,825.6 1348.3,826.4 1349.4,827.2 1350.4,828.1 1351.5,828.9 1352.5,829.7 1353.6,830.5 1354.6,831.3 1355.7,832.1 1356.8,833.0 1357.8,833.8 1358.9,834.6 1359.9,835.4 1361.0,836.2 1362.0,837.1 1363.1,837.9 1364.1,838.7 1365.2,839.5 1366.3,840.3 1367.3,841.1 1368.4,842.0 1369.4,842.8 1370.5,843.6 1371.5,844.4 1372.6,846.1 1373.7,847.7 1374.7,849.3 1375.8,851.0 1376.8,852.6 1377.9,854.2 1378.9,855.9 1380.0,857.5 1381.0,859.1 1382.1,860.8 1383.2,862.4 1384.2,864.1 1385.3,865.7 1386.3,867.3 1387.4,869.0 1388.4,870.6 1389.5,872.2 1390.5,873.9 1391.6,875.5 1392.7,877.1 1393.7,878.8 1394.8,880.4 1395.8,882.0 1396.9,883.7 1397.9,885.3 1399.0,887.0 1400.1,888.6 1401.1,890.2 1402.2,891.9 1403.2,893.5 1404.3,895.1 1405.3,896.8 1406.4,898.4 1407.4,900.0 1408.5,901.7 1409.6,903.3 1410.6,905.0 1411.7,906.6 1412.7,908.2 1413.8,909.9 1414.8,911.5 1415.9,913.1 1416.9,914.8 1418.0,916.4 1419.1,918.0 1420.1,919.7 1421.2,921.3 1422.2,922.9 1423.3,924.6 1424.3,926.2 1425.4,927.9 1426.5,929.5 1427.5,931.1 1428.6,932.8 1429.6,934.4 1430.7,936.0 1431.7,937.7 1432.8,939.3 1433.8,940.9 1434.9,942.6 1436.0,944.2 1437.0,945.9 1438.1,947.5 1439.1,949.1 1440.2,950.8 1441.2,952.4 1442.3,954.0 1443.3,955.7 1444.4,957.3 1445.5,958.9 1446.5,960.6 1447.6,962.2 1448.6,963.8 1449.7,965.5 1450.7,967.1 1451.8,968.8 1452.9,970.4 1453.9,972.0 1455.0,973.7 1456.0,975.3 1457.1,976.9 1458.1,978.6 1459.2,980.2 1460.2,981.8 1461.3,983.5 1462.4,985.1 1463.4,986.8 1464.5,988.4 1465.5,990.0 1466.6,991.7 1467.6,993.3 1468.7,994.9 1469.7,996.6 1470.8,998.2 1471.9,999.8 1472.9,1001.5 1474.0,1003.1 1475.0,1004.7 1476.1,1006.4 1477.1,1008.0 1478.2,1009.7 1479.3,1011.3 1480.3,1012.9 1481.4,1014.6 1482.4,1016.2 1483.5,1017.8 1484.5,1019.5 1485.6,1021.1 1486.6,1022.7 1487.7,1024.4 1488.8,1026.0 1489.8,1027.7 1490.9,1029.3 1491.9,1030.9 1493.0,1032.6 1494.0,1034.2 1495.1,1035.8 1496.1,1037.5 1497.2,1039.1 1498.3,1040.7 1499.3,1042.4 1500.4,1044.0 1501.4,1045.6 1502.5,1047.3 1503.5,1048.9 1504.6,1050.6 1505.7,1052.2 1506.7,1053.8 1507.8,1055.5 1508.8,1057.1 1509.9,1058.7 1510.9,1060.4 1512.0,1062.0 1513.0,1063.6 1514.1,1065.3 1515.2,1066.9 1516.2,1068.6 1517.3,1070.2 1518.3,1071.8 1519.4,1073.5 1520.4,1075.1 1521.5,1076.7 1522.5,1078.4 1523.6,1080.0 1524.7,1081.6 1525.7,1083.3 1526.8,1084.9 1527.8,1086.5 1528.9,1088.2 1529.9,1089.8 1531.0,1091.5 1532.1,1093.1 1533.1,1094.7 1534.2,1096.4 1535.2,1098.0 1536.3,1099.6 1537.3,1101.3 1538.4,1102.9 1539.4,1104.5 1540.5,1106.2 1541.6,1107.8 1542.6,1109.5 1543.7,1111.1 1544.7,1112.7 1545.8,1114.4 1546.8,1116.0 1547.9,1117.6 1548.9,1119.3 1550.0,1120.9 1551.1,1122.5 1552.1,1124.2 1553.2,1125.8 1554.2,1127.4 1555.3,1129.1 1556.3,1130.7 1557.4,1132.4 1558.5,1134.0 1559.5,1135.6 1560.6,1137.3 1561.6,1138.9 1562.7,1140.5 1563.7,1142.2 1564.8,1143.8 1565.8,1145.4 1566.9,1147.1 1568.0,1148.7 1569.0,1150.4 1570.1,1152.0 1571.1,1153.6 1572.2,1155.3 1573.2,1156.9 1574.3,1158.5 1575.3,1160.2 1576.4,1161.8 1577.5,1163.4 1578.5,1165.1 1579.6,1166.7 1580.6,1168.3 1581.7,1170.0 1582.7,1171.6 1583.8,1173.3 1584.9,1174.9 1585.9,1176.5 1587.0,1178.2 1588.0,1179.8 1589.1,1181.4 1590.1,1183.1 1591.2,1184.7 1592.2,1186.3 1593.3,1188.0 1594.4,1189.6 1595.4,1191.3 1596.5,1192.9 1597.5,1194.5 1598.6,1196.2 1599.6,1197.8 1600.7,1199.4 1601.7,1201.1 1602.8,1202.7 1603.9,1204.3 1604.9,1206.0 1606.0,1207.6 1607.0,1209.2 1608.1,1210.9 1609.1,1212.5 1610.2,1214.2 1611.3,1215.8 1612.3,1217.4 1613.4,1219.1 1614.4,1220.7 1615.5,1222.3 1616.5,1224.0 1617.6,1225.6 1618.6,1227.2 1619.7,1228.9 1620.8,1230.5 1621.8,1232.2 1622.9,1233.8 1623.9,1235.4 1625.0,1237.1 1626.0,1238.7 1627.1,1240.3 1628.1,1242.0 1629.2,1243.6 1630.3,1245.2 1631.3,1246.9 1632.4,1248.5 1633.4,1250.1 1634.5,1251.8 1635.5,1253.4 1636.6,1255.1 1637.7,1256.7 1638.7,1258.3 1639.8,1260.0 1640.8,1261.6 1641.9,1263.2 1642.9,1264.9 1644.0,1266.5 1645.0,1268.1 1646.1,1269.8 1647.2,1271.4 1648.2,1273.1 1649.3,1274.7 1650.3,1276.3 1651.4,1278.0 1652.4,1279.6 1653.5,1281.2 1654.5,1282.9 1655.6,1284.5 1656.7,1286.1 1657.7,1287.8 1658.8,1289.4 1659.8,1291.0 1660.9,1292.7 1661.9,1294.3 1663.0,1296.0 1664.1,1297.6 1665.1,1299.2 1666.2,1300.9 1667.2,1302.5 1668.3,1304.1 1669.3,1305.8 1670.4,1307.4 1671.4,1309.0 1672.5,1310.7 1673.6,1312.3 1674.6,1314.0 1675.7,1315.6 1676.7,1317.2 1677.8,1318.9 1678.8,1320.5 1679.9,1322.1 1680.9,1323.8 1682.0,1325.4 1683.1,1327.0 1684.1,1328.7 1685.2,1330.3 1686.2,1331.9 1687.3,1333.6 1688.3,1335.2 1689.4,1336.9 1690.5,1338.5 1691.5,1340.1 1692.6,1341.8 1693.6,1343.4 1694.7,1345.0 1695.7,1346.7 1696.8,1348.3 1697.8,1349.9 1698.9,1351.6 1700.0,1353.2 1701.0,1354.9 1702.1,1356.5 1703.1,1358.1 1704.2,1359.8 1705.2,1361.4 1706.3,1363.0 1707.3,1364.7 1708.4,1366.3 1709.5,1367.9 1710.5,1369.6 1711.6,1371.2 1712.6,1372.8 1713.7,1374.5 1714.7,1376.1 1715.8,1377.8 1716.9,1379.4 1717.9,1381.0 1719.0,1382.7 1720.0,1384.3 1721.1,1385.9 1722.1,1387.6 1723.2,1389.2 1724.2,1390.8 1725.3,1392.5 1725.3,934.4" fill="#e6f0f8"/><polyline points="1197.3,574.5 1725.3,1392.5" fill="none" stroke="#00ff00" stroke-width="2.7"/><polyline points="1197.3,729.9 1725.3,934.4" fill="none" stroke="#0000ff" stroke-width="2.7"/><polyline points="1197.3,709.5 1725.3,1118.5" fill="none" stroke="#ffa500" stroke-width="2.7"/><circle cx="1250.1" cy="750.4" r="7" fill="#ff0000"/></g><text x="1162.5" y="941.1" font-family="Liberation Sans" font-size="16" fill="#4d4d4d" text-anchor="end">0</text><text x="1197.3" y="976" font-family="Liberation Sans" font-size="16" fill="#4d4d4d" text-anchor="middle">0</text><text x="1162.5" y="859.3" font-family="Liberation Sans" font-size="16" fill="#4d4d4d" text-anchor="end">10</text><text x="1302.9" y="976" font-family="Liberation Sans" font-size="16" fill="#4d4d4d" text-anchor="middle">10</text><text x="1162.5" y="777.5" font-family="Liberation Sans" font-size="16" fill="#4d4d4d" text-anchor="end">20</text><text x="1408.5" y="976" font-family="Liberation Sans" font-size="16" fill="#4d4d4d" text-anchor="middle">20</text><text x="1162.5" y="695.7" font-family="Liberation Sans" font-size="16" fill="#4d4d4d" text-anchor="end">30</text><text x="1514.1" y="976" font-family="Liberation Sans" font-size="16" fill="#4d4d4d" text-anchor="middle">30</text><text x="1162.5" y="613.9" font-family="Liberation Sans" font-size="16" fill="#4d4d4d" text-anchor="end">40</text><text x="1619.7" y="976" font-family="Liberation Sans" font-size="16" fill="#4d4d4d" text-anchor="middle">40</text><text x="1162.5" y="532.1" font-family="Liberation Sans" font-size="16" fill="#4d4d4d" text-anchor="end">50</text><text x="1725.3" y="976" font-family="Liberation Sans" font-size="16" fill="#4d4d4d" text-anchor="middle">50</text><text x="1170.80" y="492.6" font-family="Liberation Sans" font-size="21.5" fill="#000" textLength="386.69" lengthAdjust="spacingAndGlyphs" >Optimización de Producción de Pasteles</text><text x="1399.40" y="996.5" font-family="Liberation Sans" font-size="16.5" fill="#000" textLength="123.74" lengthAdjust="spacingAndGlyphs" >Pastel A (cajas)</text><text transform="translate(1138.1,791.00) rotate(-90)" font-family="Liberation Sans" font-size="16.5" fill="#000" textLength="123.96" lengthAdjust="spacingAndGlyphs">Pastel B (cajas)</text><text x="1779.60" y="689" font-family="Liberation Sans" font-size="17.3" fill="#000" textLength="106.64" lengthAdjust="spacingAndGlyphs" >Restricciones</text><line x1="1782" y1="715" x2="1805" y2="715" stroke="#00ff00" stroke-width="3"/><text x="1817.00" y="721.3" font-family="Liberation Sans" font-size="14" fill="#000" textLength="43.40" lengthAdjust="spacingAndGlyphs" >Azúcar</text><line x1="1782" y1="743.7" x2="1805" y2="743.7" stroke="#0000ff" stroke-width="3"/><text x="1817.00" y="750.0" font-family="Liberation Sans" font-size="14" fill="#000" textLength="41.08" lengthAdjust="spacingAndGlyphs" >Harina</text><line x1="1782" y1="772.8" x2="1805" y2="772.8" stroke="#ffa500" stroke-width="3"/><text x="1817.00" y="779.1" font-family="Liberation Sans" font-size="14" fill="#000" textLength="71.32" lengthAdjust="spacingAndGlyphs" >Mantequilla</text></svg>
</body></html>
